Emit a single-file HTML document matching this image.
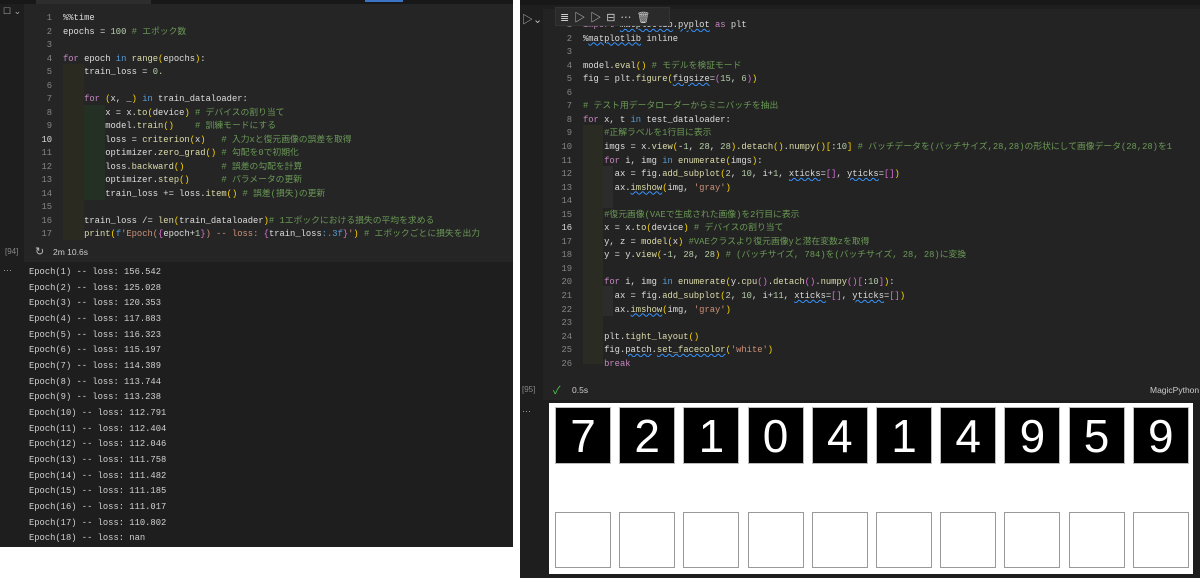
<!DOCTYPE html>
<html><head><meta charset="utf-8"><style>
*{margin:0;padding:0;box-sizing:border-box}
body{width:1200px;height:581px;background:#fff;position:relative;overflow:hidden;font-family:"Liberation Mono","Noto Sans CJK JP",monospace;font-size:8.8px;color:#dedede}
.abs{position:absolute}
.ln{position:absolute;white-space:pre;line-height:13px;height:13px}
.num{position:absolute;width:30px;text-align:right;color:#858585;white-space:pre;line-height:13px}
.k{color:#c586c0}.b{color:#569cd6}.f{color:#dcdcaa}.n{color:#b5cea8}.c{color:#6a9955}.s{color:#ce9178}.p{color:#ffd700}.q{color:#da70d6}.v{color:#9cdcfe}
.u{text-decoration:underline wavy #3794ff;text-decoration-thickness:1px}
.ui{font-family:"Liberation Sans","Noto Sans CJK JP",sans-serif;color:#ccc;font-size:9px}
.out{position:absolute;white-space:pre;color:#d0d0d0;line-height:15.65px}
.dg{position:absolute;width:56px;height:57px;background:#000;border:1px solid #bbb;color:#fff;font-family:"Liberation Sans",sans-serif;font-size:46px;text-align:center;line-height:57px;z-index:3}
.eb{position:absolute;width:56px;height:56px;background:#fff;border:1px solid #999;z-index:3}
</style></head><body>

<!-- LEFT PANEL -->
<div class="abs" style="left:0;top:0;width:513px;height:547px;background:#1e1e1e"></div>
<div class="abs" style="left:0;top:0;width:513px;height:4px;background:#181818"></div>
<div class="abs" style="left:365px;top:0;width:38px;height:2px;background:#3b74c4"></div>
<div class="abs" style="left:24px;top:4px;width:489px;height:258px;background:#252526"></div>
<div class="abs" style="left:36px;top:0;width:115px;height:4px;background:#2d2d2d"></div>
<div class="abs ui" style="left:3px;top:6px;color:#aaa">☐ ⌄</div>
<div class="abs" style="left:63px;top:64px;width:21px;height:176px;background:#2b2a20"></div>
<div class="abs" style="left:84px;top:105px;width:21px;height:95px;background:#243024"></div>

<div id="L"></div>
<div class="ui abs" style="left:5px;top:247px;font-size:8px;color:#888">[94]</div>
<div class="ui abs" style="left:35px;top:245px;font-size:11px;color:#bbb">↻</div>
<div class="ui abs" style="left:53px;top:247px;font-size:8.5px">2m 10.6s</div>
<div class="ui abs" style="left:3px;top:265px;color:#aaa">···</div>
<div class="out" style="left:29px;top:265px">Epoch(1) -- loss: 156.542
Epoch(2) -- loss: 125.028
Epoch(3) -- loss: 120.353
Epoch(4) -- loss: 117.883
Epoch(5) -- loss: 116.323
Epoch(6) -- loss: 115.197
Epoch(7) -- loss: 114.389
Epoch(8) -- loss: 113.744
Epoch(9) -- loss: 113.238
Epoch(10) -- loss: 112.791
Epoch(11) -- loss: 112.404
Epoch(12) -- loss: 112.046
Epoch(13) -- loss: 111.758
Epoch(14) -- loss: 111.482
Epoch(15) -- loss: 111.185
Epoch(16) -- loss: 111.017
Epoch(17) -- loss: 110.802
Epoch(18) -- loss: nan</div>

<!-- RIGHT PANEL -->
<div class="abs" style="left:520px;top:0;width:680px;height:578px;background:#1e1e1e"></div>
<div class="abs" style="left:520px;top:0;width:680px;height:5px;background:#181818"></div>
<div class="abs" style="left:543px;top:9px;width:657px;height:391px;background:#232323"></div>
<div class="ui abs" style="left:522px;top:11px;font-size:11px;color:#bbb">▷⌄</div>
<div class="abs" style="left:583px;top:125px;width:20px;height:239px;background:#2a2b22"></div>
<div class="abs" style="left:603px;top:166px;width:10px;height:42px;background:#2c2c2c"></div>
<div class="abs" style="left:603px;top:286px;width:10px;height:30px;background:#2c2c2c"></div>
<div class="ui abs" style="left:522px;top:385px;font-size:8px;color:#888">[95]</div>
<div class="ui abs" style="left:553px;top:382px;font-size:11px;color:#4ec94e">✓</div>
<div class="ui abs" style="left:572px;top:385px;font-size:8.5px">0.5s</div>
<div class="ui abs" style="left:1150px;top:385px;font-size:8.5px">MagicPython</div>
<div class="ui abs" style="left:522px;top:406px;color:#aaa">···</div>
<div class="abs" style="left:549px;top:403px;width:644px;height:171px;background:#fff"></div>
<div id="R"></div>

<script>
const L=[
['1','%%time'],
['2','epochs = <span class="n">100</span> <span class="c"># エポック数</span>'],
['3',''],
['4','<span class="k">for</span> epoch <span class="b">in</span> <span class="f">range</span><span class="p">(</span>epochs<span class="p">)</span>:'],
['5','    train_loss = <span class="n">0.</span>'],
['6',''],
['7','    <span class="k">for</span> <span class="p">(</span>x, _<span class="p">)</span> <span class="b">in</span> train_dataloader:'],
['8','        x = x.<span class="f">to</span><span class="p">(</span>device<span class="p">)</span> <span class="c"># デバイスの割り当て</span>'],
['9','        model.<span class="f">train</span><span class="p">()</span>    <span class="c"># 訓練モードにする</span>'],
['10','        loss = <span class="f">criterion</span><span class="p">(</span>x<span class="p">)</span>   <span class="c"># 入力xと復元画像の誤差を取得</span>'],
['11','        optimizer.<span class="f">zero_grad</span><span class="p">()</span> <span class="c"># 勾配を0で初期化</span>'],
['12','        loss.<span class="f">backward</span><span class="p">()</span>       <span class="c"># 誤差の勾配を計算</span>'],
['13','        optimizer.<span class="f">step</span><span class="p">()</span>      <span class="c"># パラメータの更新</span>'],
['14','        train_loss += loss.<span class="f">item</span><span class="p">()</span> <span class="c"># 誤差(損失)の更新</span>'],
['15',''],
['16','    train_loss /= <span class="f">len</span><span class="p">(</span>train_dataloader<span class="p">)</span><span class="c"># 1エポックにおける損失の平均を求める</span>'],
['17','    <span class="f">print</span><span class="p">(</span><span class="b">f</span><span class="s">\'Epoch(</span><span class="q">{</span>epoch+<span class="n">1</span><span class="q">}</span><span class="s">) -- loss: </span><span class="q">{</span>train_loss<span class="b">:.3f</span><span class="q">}</span><span class="s">\'</span><span class="p">)</span> <span class="c"># エポックごとに損失を出力</span>']
];
let h='';
L.forEach((l,i)=>{const y=12+i*13.5;h+=`<div class="num" style="left:22px;top:${y}px;${l[0]=='10'?'color:#ddd':''}">${l[0]}</div><div class="ln" style="left:63px;top:${y}px">${l[1]}</div>`});
document.getElementById('L').innerHTML=h;
const R=[
['1','<span class="k">import</span> <span class="u">matplotlib</span>.<span class="u">pyplot</span> <span class="k">as</span> plt'],
['2','%<span class="u">matplotlib</span> inline'],
['3',''],
['4','model.<span class="f">eval</span><span class="p">()</span> <span class="c"># モデルを検証モード</span>'],
['5','fig = plt.<span class="f">figure</span><span class="p">(</span><span class="u">figsize</span>=<span class="q">(</span><span class="n">15</span>, <span class="n">6</span><span class="q">)</span><span class="p">)</span>'],
['6',''],
['7','<span class="c"># テスト用データローダーからミニバッチを抽出</span>'],
['8','<span class="k">for</span> x, t <span class="b">in</span> test_dataloader:'],
['9','    <span class="c">#正解ラベルを1行目に表示</span>'],
['10','    imgs = x.<span class="f">view</span><span class="p">(</span>-<span class="n">1</span>, <span class="n">28</span>, <span class="n">28</span><span class="p">)</span>.<span class="f">detach</span><span class="p">()</span>.<span class="f">numpy</span><span class="p">()</span><span class="p">[</span>:<span class="n">10</span><span class="p">]</span> <span class="c"># バッチデータを(バッチサイズ,28,28)の形状にして画像データ(28,28)を1</span>'],
['11','    <span class="k">for</span> i, img <span class="b">in</span> <span class="f">enumerate</span><span class="p">(</span>imgs<span class="p">)</span>:'],
['12','      ax = fig.<span class="f">add_subplot</span><span class="p">(</span><span class="n">2</span>, <span class="n">10</span>, i+<span class="n">1</span>, <span class="u">xticks</span>=<span class="q">[]</span>, <span class="u">yticks</span>=<span class="q">[]</span><span class="p">)</span>'],
['13','      ax.<span class="f u">imshow</span><span class="p">(</span>img, <span class="s">\'gray\'</span><span class="p">)</span>'],
['14',''],
['15','    <span class="c">#復元画像(VAEで生成された画像)を2行目に表示</span>'],
['16','    x = x.<span class="f">to</span><span class="p">(</span>device<span class="p">)</span> <span class="c"># デバイスの割り当て</span>'],
['17','    y, z = <span class="f">model</span><span class="p">(</span>x<span class="p">)</span> <span class="c">#VAEクラスより復元画像yと潜在変数zを取得</span>'],
['18','    y = y.<span class="f">view</span><span class="p">(</span>-<span class="n">1</span>, <span class="n">28</span>, <span class="n">28</span><span class="p">)</span> <span class="c"># (バッチサイズ, 784)を(バッチサイズ, 28, 28)に変換</span>'],
['19',''],
['20','    <span class="k">for</span> i, img <span class="b">in</span> <span class="f">enumerate</span><span class="p">(</span>y.<span class="f">cpu</span><span class="q">()</span>.<span class="f">detach</span><span class="q">()</span>.<span class="f">numpy</span><span class="q">()</span><span class="q">[</span>:<span class="n">10</span><span class="q">]</span><span class="p">)</span>:'],
['21','      ax = fig.<span class="f">add_subplot</span><span class="p">(</span><span class="n">2</span>, <span class="n">10</span>, i+<span class="n">11</span>, <span class="u">xticks</span>=<span class="q">[]</span>, <span class="u">yticks</span>=<span class="q">[]</span><span class="p">)</span>'],
['22','      ax.<span class="f u">imshow</span><span class="p">(</span>img, <span class="s">\'gray\'</span><span class="p">)</span>'],
['23',''],
['24','    plt.<span class="f">tight_layout</span><span class="p">()</span>'],
['25','    fig.<span class="u">patch</span>.<span class="f u">set_facecolor</span><span class="p">(</span><span class="s">\'white\'</span><span class="p">)</span>'],
['26','    <span class="k">break</span>']
];
h='';
R.forEach((l,i)=>{const y=19+i*13.55;h+=`<div class="num" style="left:542px;top:${y}px;${l[0]=='16'?'color:#ddd':''}">${l[0]}</div><div class="ln" style="left:583px;top:${y}px;width:617px;overflow:hidden">${l[1]}</div>`});
const d=['7','2','1','0','4','1','4','9','5','9'];
d.forEach((c,i)=>{const x=555+i*64.2;h+=`<div class="dg" style="left:${x}px;top:407px">${c}</div><div class="eb" style="left:${x}px;top:512px"></div>`});
document.getElementById('R').innerHTML=h;
</script>
<div class="abs" style="left:555px;top:7px;width:115px;height:19px;background:#2a2a2a;border:1px solid #333;z-index:5"></div>
<div class="ui abs" style="left:560px;top:9px;font-size:11px;color:#ccc;letter-spacing:5px;z-index:6">≣▷▷⊟⋯🗑</div>
</body></html>
